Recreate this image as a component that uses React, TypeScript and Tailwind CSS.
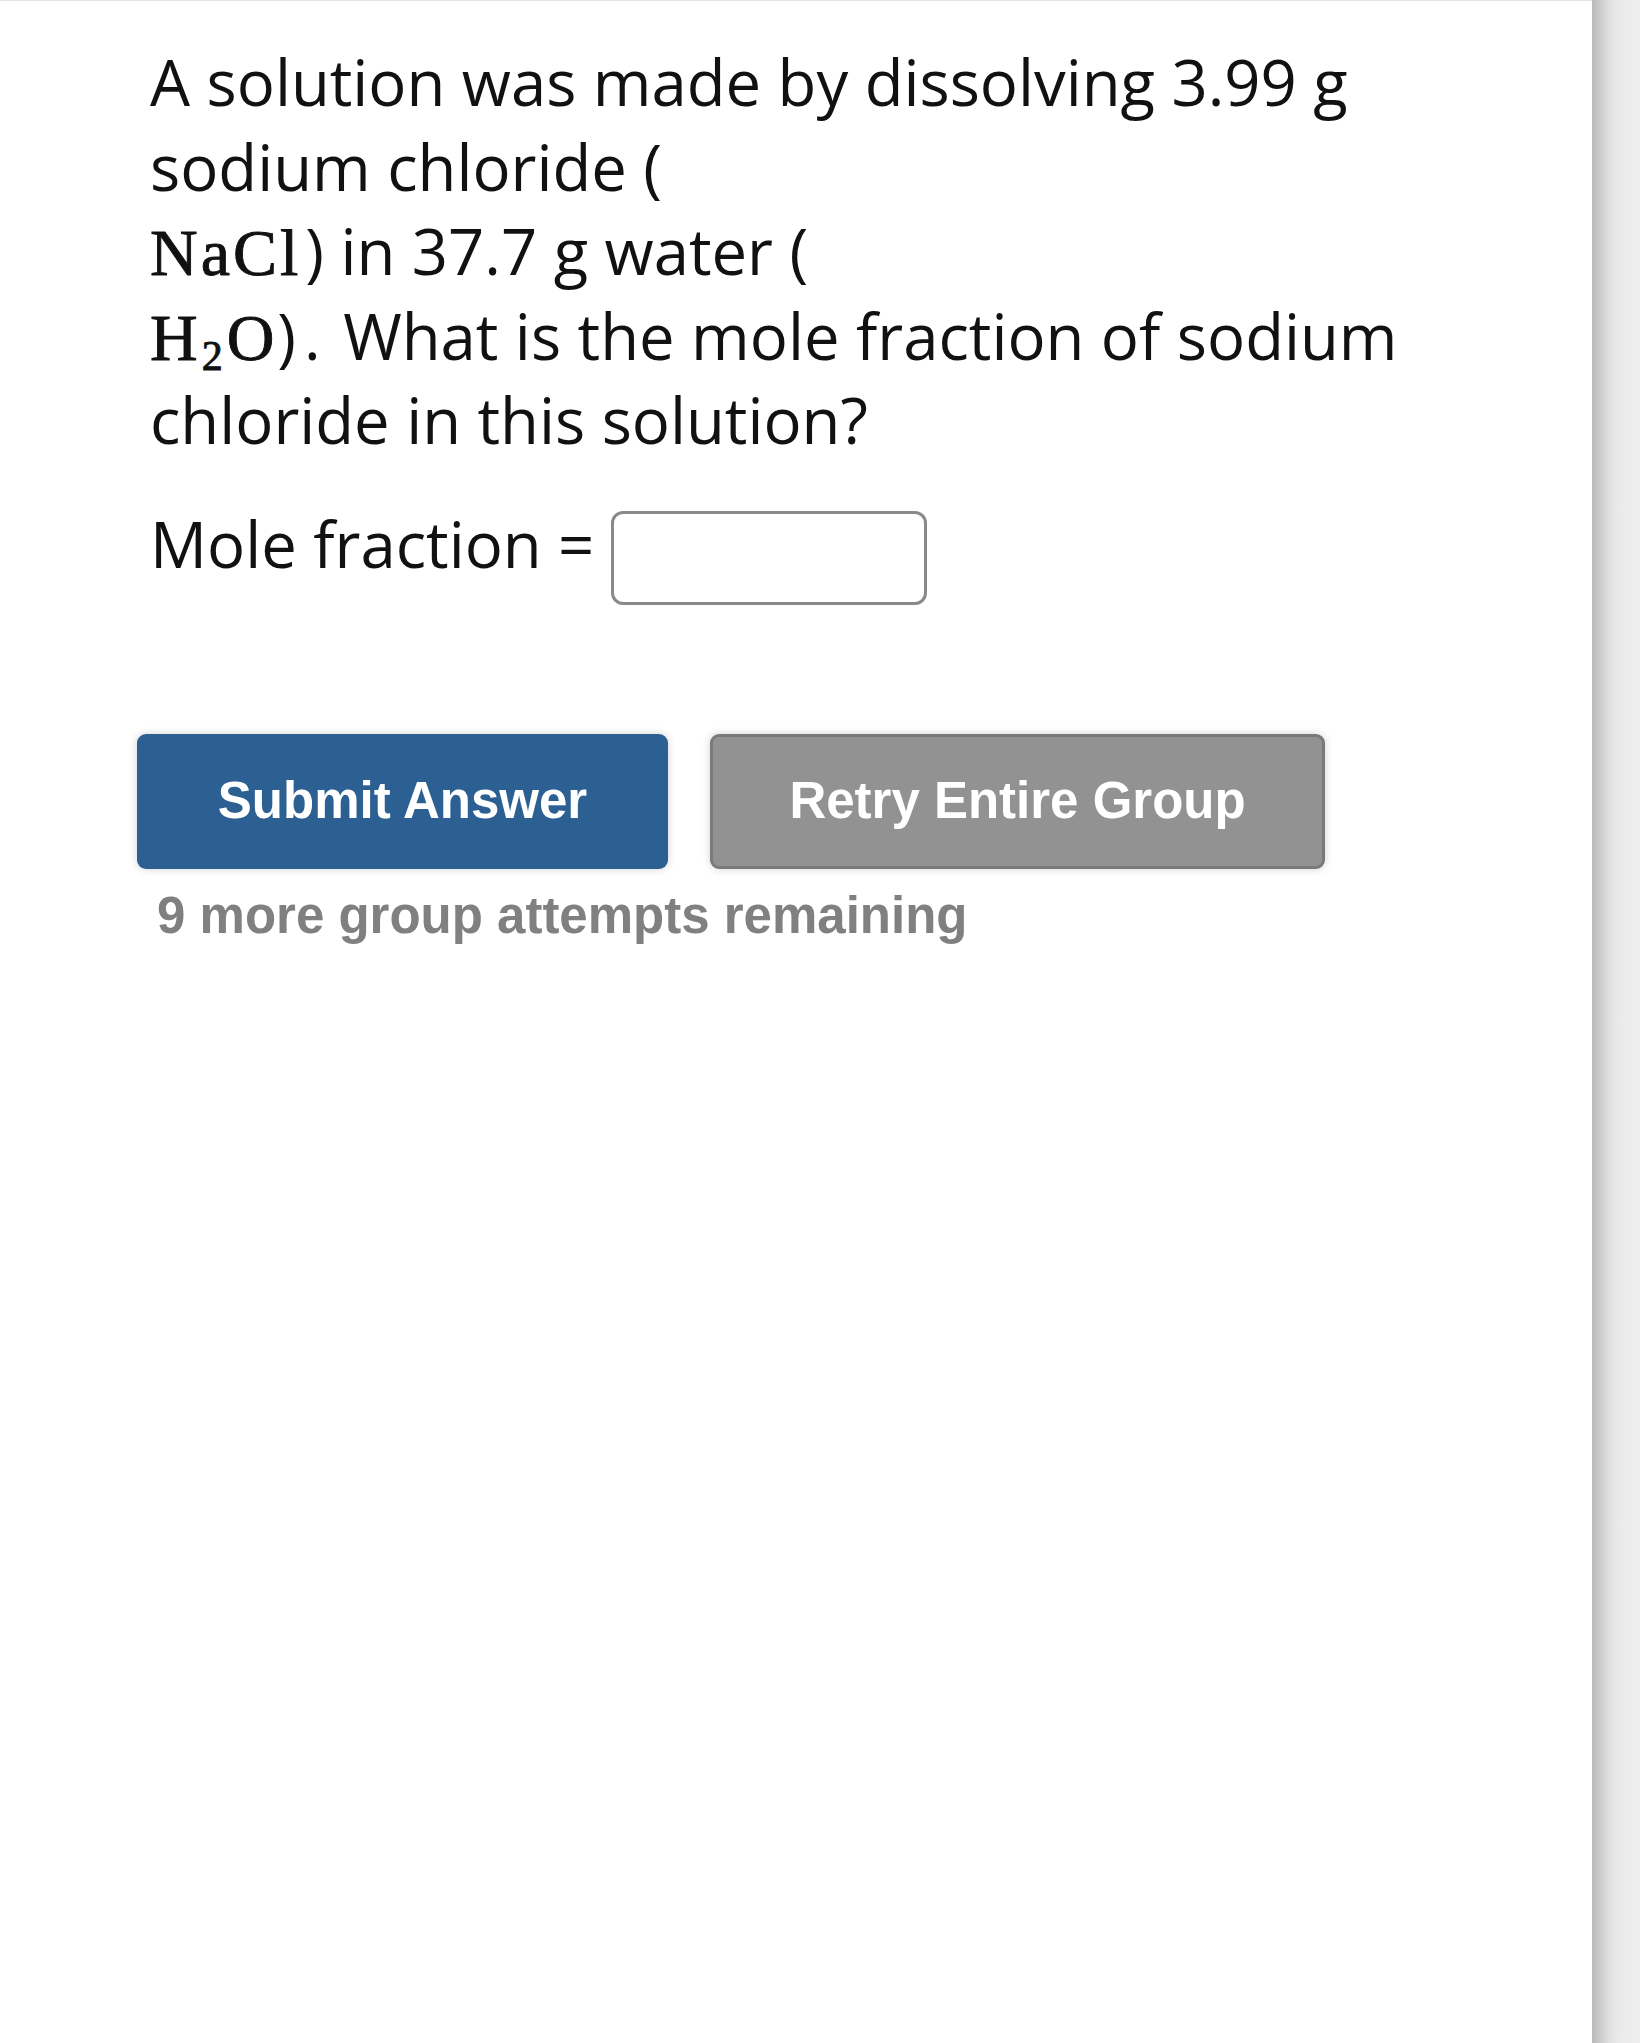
import React from "react";

function Chem({ children }: { children: React.ReactNode }) {
  return (
    <span className="font-['Liberation_Serif',serif] text-[66px] leading-none tracking-[3px] text-[#111] [-webkit-text-stroke:0.9px_#111]">
      {children}
    </span>
  );
}

export default function App() {
  return (
    <div className="flex min-h-[2043px] w-full bg-white">
      <main className="flex-1 border-t border-[#e4e4e4]">
        <div className="pl-[150px] pt-[39px] font-['Open_Sans',sans-serif] text-[63.4px] leading-[84.5px] text-[#111]">
          <p className="whitespace-nowrap">
            A solution was made by dissolving 3.99 g
            <br />
            sodium chloride (
            <br />
            <Chem>NaCl</Chem>
            <span className="ml-[4px]">)</span> in 37.7 g water (
            <br />
            <Chem>
              H
              <span className="ml-[1px] align-[-10px] text-[42px] tracking-normal">2</span>
              <span className="ml-[4px]">O</span>
            </Chem>
            )<span className="ml-[8px]">.</span> <span className="ml-[6px]">What</span> is the mole fraction of sodium
            <br />
            chloride in this solution?
          </p>
          <div className="mt-[48px] flex items-start">
            <span className="mt-[1px] leading-[64px] whitespace-nowrap">Mole fraction =</span>
            <input
              type="text"
              aria-label="Mole fraction"
              className="ml-[17px] h-[94px] w-[316px] rounded-[12px] border-[3px] border-[#8a8a8a] bg-white outline-none"
            />
          </div>
        </div>
        <div className="mt-[129px] flex gap-[42px] pl-[137px] font-['Liberation_Sans',Arial,sans-serif] text-[51px] font-bold text-white">
          <button className="flex h-[135px] w-[531px] items-center justify-center rounded-[9px] bg-[#2c6093] shadow-[0_0_8px_rgba(0,0,0,0.18)]">
            Submit Answer
          </button>
          <button className="flex h-[135px] w-[615px] items-center justify-center rounded-[9px] border-[3px] border-[#7a7a7a] bg-[#929292] shadow-[0_0_8px_rgba(0,0,0,0.18)]">
            Retry Entire Group
          </button>
        </div>
        <p className="mt-[21px] pl-[157px] font-['Liberation_Sans',Arial,sans-serif] text-[51px] font-bold leading-[51px] text-[#808080]">
          9 more group attempts remaining
        </p>
      </main>
      <div className="w-[48px] bg-[linear-gradient(to_right,#b9b9b9_0%,#cdcdcd_18%,#e2e2e2_38%,#ebebeb_60%,#eeeeee_100%)]" />
    </div>
  );
}
